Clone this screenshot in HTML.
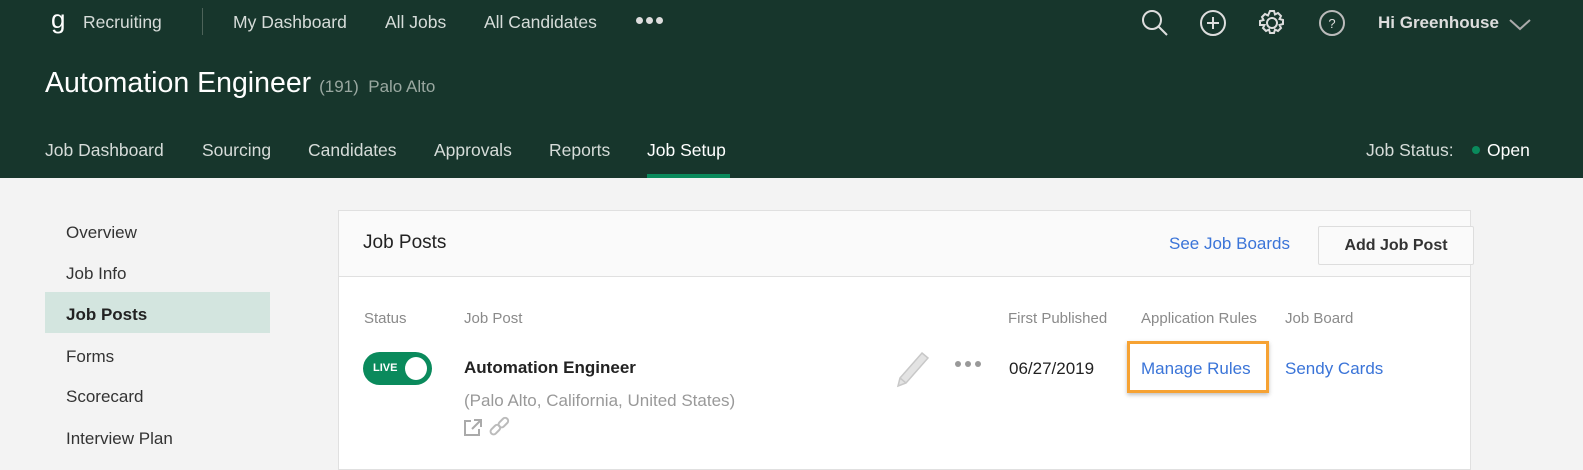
<!DOCTYPE html>
<html><head><style>
*{margin:0;padding:0;box-sizing:border-box}
body{width:1583px;height:462px;overflow:hidden;background:#f3f3f3;font-family:"Liberation Sans",sans-serif;position:relative}
.a{position:absolute;white-space:nowrap}
#hd{position:absolute;left:0;top:0;width:1583px;height:178px;background:#17362c}
.n{color:#d6dcd9;font-size:17.5px}
.sb{color:#333;font-size:17px;left:66px}
.lbl{color:#8a8a8a;font-size:15px;top:310px}
.blue{color:#3a74d8}
</style></head><body>
<div id="hd">
<div class="a" style="left:51px;top:4px;color:#fff;font-size:26px">g</div>
<div class="a n" style="left:83px;top:12px">Recruiting</div>
<div class="a" style="left:202px;top:8px;width:1px;height:27px;background:#4d6359"></div>
<div class="a n" style="left:233px;top:12px">My Dashboard</div>
<div class="a n" style="left:385px;top:12px">All Jobs</div>
<div class="a n" style="left:484px;top:12px">All Candidates</div>
<div class="a" style="left:636px;top:17px;width:7px;height:7px;border-radius:50%;background:#ddd"></div>
<div class="a" style="left:646px;top:17px;width:7px;height:7px;border-radius:50%;background:#ddd"></div>
<div class="a" style="left:656px;top:17px;width:7px;height:7px;border-radius:50%;background:#ddd"></div>
<svg class="a" style="left:1140px;top:8px" width="30" height="30" viewBox="0 0 30 30" fill="none" stroke="#ddd" stroke-width="2"><circle cx="12" cy="12" r="9"/><line x1="18.5" y1="18.5" x2="27" y2="27"/></svg>
<svg class="a" style="left:1199px;top:9px" width="28" height="28" viewBox="0 0 28 28" fill="none" stroke="#ddd" stroke-width="2"><circle cx="14" cy="14" r="12"/><path d="M14 8v12M8 14h12"/></svg>
<svg class="a" style="left:1258px;top:9px" width="28" height="28" viewBox="0 0 28 28" fill="none" stroke="#ddd" stroke-width="2"><circle cx="14" cy="14" r="5"/><path d="M12 2h4l1 3.5 3-1.5 3 3-1.5 3 3.5 1v4l-3.5 1 1.5 3-3 3-3-1.5-1 3.5h-4l-1-3.5-3 1.5-3-3 1.5-3L2 16v-4l3.5-1L4 8l3-3 3 1.5z"/></svg>
<svg class="a" style="left:1318px;top:9px" width="28" height="28" viewBox="0 0 28 28" fill="none" stroke="#bbb" stroke-width="2"><circle cx="14" cy="14" r="12"/><text x="14" y="19" font-size="13" text-anchor="middle" fill="#ddd" stroke="none" font-family="Liberation Sans">?</text></svg>
<div class="a" style="left:1378px;top:13px;color:#ddd;font-size:17px;font-weight:bold">Hi Greenhouse</div>
<svg class="a" style="left:1508px;top:16px" width="24" height="16" viewBox="0 0 24 16" fill="none" stroke="#aaa" stroke-width="2"><path d="M2 4l10 9 10-9"/></svg>
<div class="a" style="left:45px;top:67px;color:#fff;font-size:28.5px">Automation Engineer <span style="font-size:17px;color:#9aa8a1">(191)&nbsp; Palo Alto</span></div>
<div class="a n" style="left:45px;top:140px">Job Dashboard</div>
<div class="a n" style="left:202px;top:140px">Sourcing</div>
<div class="a n" style="left:308px;top:140px">Candidates</div>
<div class="a n" style="left:434px;top:140px">Approvals</div>
<div class="a n" style="left:549px;top:140px">Reports</div>
<div class="a" style="left:647px;top:140px;color:#fff;font-size:17.5px">Job Setup</div>
<div class="a" style="left:647px;top:174px;width:83px;height:4px;background:#0a8a5c"></div>
<div class="a n" style="left:1366px;top:140px">Job Status:</div>
<div class="a" style="left:1472px;top:146px;width:8px;height:8px;border-radius:50%;background:#0a8a5c"></div>
<div class="a" style="left:1487px;top:140px;color:#fff;font-size:17.5px">Open</div>
</div>
<div class="a sb" style="top:223px">Overview</div>
<div class="a sb" style="top:264px">Job Info</div>
<div class="a" style="left:45px;top:292px;width:225px;height:41px;background:#d3e5df"></div>
<div class="a sb" style="top:305px;font-weight:bold;color:#222">Job Posts</div>
<div class="a sb" style="top:347px">Forms</div>
<div class="a sb" style="top:387px">Scorecard</div>
<div class="a sb" style="top:429px">Interview Plan</div>
<div class="a" style="left:338px;top:210px;width:1133px;height:260px;background:#fff;border:1px solid #e0e0e0"></div>
<div class="a" style="left:339px;top:211px;width:1131px;height:66px;background:#fafafa;border-bottom:1px solid #e0e0e0"></div>
<div class="a" style="left:363px;top:232px;font-size:19px;color:#222">Job Posts</div>
<div class="a blue" style="left:1169px;top:234px;font-size:17px">See Job Boards</div>
<div class="a" style="left:1318px;top:226px;width:156px;height:39px;border:1px solid #ddd;background:#fafafa;border-radius:2px;font-size:16px;font-weight:bold;color:#333;text-align:center;line-height:37px">Add Job Post</div>
<div class="a lbl" style="left:364px">Status</div>
<div class="a lbl" style="left:464px">Job Post</div>
<div class="a lbl" style="left:1008px">First Published</div>
<div class="a lbl" style="left:1141px">Application Rules</div>
<div class="a lbl" style="left:1285px">Job Board</div>
<div class="a" style="left:363px;top:352px;width:69px;height:33px;border-radius:17px;background:#0a8a5c"></div>
<div class="a" style="left:373px;top:362px;color:#fff;font-size:11px;font-weight:bold">LIVE</div>
<div class="a" style="left:405px;top:357px;width:22px;height:23px;border-radius:50%;background:#fff"></div>
<div class="a" style="left:464px;top:358px;font-size:17px;font-weight:bold;color:#222">Automation Engineer</div>
<div class="a" style="left:464px;top:391px;font-size:17px;color:#999">(Palo Alto, California, United States)</div>
<svg class="a" style="left:463px;top:418px" width="20" height="18" viewBox="0 0 20 18" fill="none" stroke="#aaa" stroke-width="2"><path d="M8 3H2v14h14v-6M11 2h7v7M18 2l-9 9"/></svg>
<svg class="a" style="left:488px;top:416px" width="24" height="22" viewBox="0 0 24 22" fill="none" stroke="#bbb" stroke-width="2"><rect x="2" y="11" width="11" height="6" rx="3" transform="rotate(-45 7 14)"/><rect x="10" y="4" width="11" height="6" rx="3" transform="rotate(-45 15 7)"/></svg>
<svg class="a" style="left:895px;top:350px" width="36" height="38" viewBox="0 0 36 38" fill="#e3e3e3" stroke="#c8c8c8" stroke-width="1.5"><path d="M27 3l6 5-22 25-8 3 2-8z"/><path d="M5 28l6 5" fill="none"/></svg>
<div class="a" style="left:955px;top:361px;width:6px;height:6px;border-radius:50%;background:#999"></div>
<div class="a" style="left:965px;top:361px;width:6px;height:6px;border-radius:50%;background:#999"></div>
<div class="a" style="left:975px;top:361px;width:6px;height:6px;border-radius:50%;background:#999"></div>
<div class="a" style="left:1009px;top:359px;font-size:17px;color:#222">06/27/2019</div>
<div class="a" style="left:1127px;top:341px;width:142px;height:52px;border:3px solid #f6a233;box-shadow:0 2px 4px rgba(0,0,0,.25)"></div>
<div class="a blue" style="left:1141px;top:359px;font-size:17px">Manage Rules</div>
<div class="a blue" style="left:1285px;top:359px;font-size:17px">Sendy Cards</div>
</body></html>
